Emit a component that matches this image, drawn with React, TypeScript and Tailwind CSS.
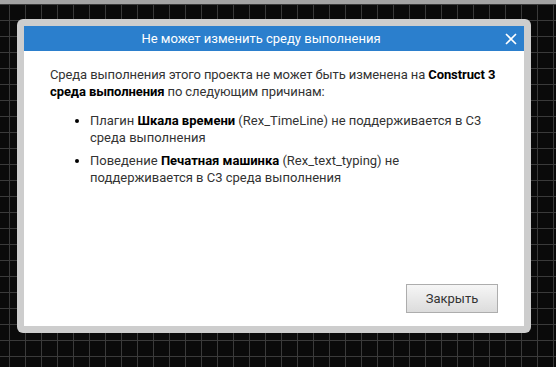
import React from "react";

export default function App() {
  const font = { fontFamily: 'Roboto, "Noto Sans", sans-serif' };
  return (
    <div
      className="w-[556px] h-[367px] overflow-hidden flex flex-col bg-[#0a0a0a]"
      style={font}
    >
      <div className="h-[4px] bg-[#a3a3a3] shrink-0" />
      <div className="flex-1 pl-[17px] pt-[15px] bg-[linear-gradient(to_right,#3a3a3a_1px,transparent_1px),linear-gradient(to_bottom,#3a3a3a_1px,transparent_1px)] [background-size:16px_16px] [background-position:9px_0px]">
        <div className="w-[514px] h-[314px] rounded-[6px] bg-[#cdcdcd] p-[7px]">
          <div className="w-[500px] h-[300px] bg-white flex flex-col">
            <div className="h-[25px] bg-[#2b7fcd] flex items-center shrink-0">
              <div className="flex-1 text-center text-white text-[13px] leading-[25px]">
                Не может изменить среду выполнения
              </div>
              <div className="w-[26px] h-[25px] flex items-center justify-center">
                <svg width="12" height="12" viewBox="0 0 12 12">
                  <path d="M1 1L11 11M11 1L1 11" stroke="white" strokeWidth="1.6" />
                </svg>
              </div>
            </div>
            <div className="flex-1 flex flex-col pl-[26px] pt-[15px] text-[13px] leading-[17px] text-[#333]">
              <p className="whitespace-nowrap tracking-[-0.1px]">
                Среда выполнения этого проекта не может быть изменена на{" "}
                <b className="font-bold text-black">Construct 3</b>
                <br />
                <b className="font-bold text-black">среда выполнения</b> по следующим причинам:
              </p>
              <div className="mt-[12px] flex flex-col gap-[6px]">
                <div className="flex">
                  <div className="w-[40px] shrink-0 flex justify-end pr-[11px] pt-[7px]">
                    <div className="w-[4px] h-[4px] rounded-full bg-black" />
                  </div>
                  <div className="whitespace-nowrap">
                    Плагин <b className="font-bold text-black">Шкала времени</b> (Rex_TimeLine) не поддерживается в C3
                    <br />
                    среда выполнения
                  </div>
                </div>
                <div className="flex">
                  <div className="w-[40px] shrink-0 flex justify-end pr-[11px] pt-[7px]">
                    <div className="w-[4px] h-[4px] rounded-full bg-black" />
                  </div>
                  <div className="whitespace-nowrap">
                    Поведение <b className="font-bold text-black">Печатная машинка</b> (Rex_text_typing) не
                    <br />
                    поддерживается в C3 среда выполнения
                  </div>
                </div>
              </div>
              <div className="mt-auto mb-[13px] mr-[26px] self-end">
                <button className="w-[92px] h-[29px] border border-[#adadad] bg-[linear-gradient(to_bottom,#f6f6f6,#dcdcdc)] text-[13px] text-[#333] flex items-center justify-center">
                  Закрыть
                </button>
              </div>
            </div>
          </div>
        </div>
      </div>
    </div>
  );
}
